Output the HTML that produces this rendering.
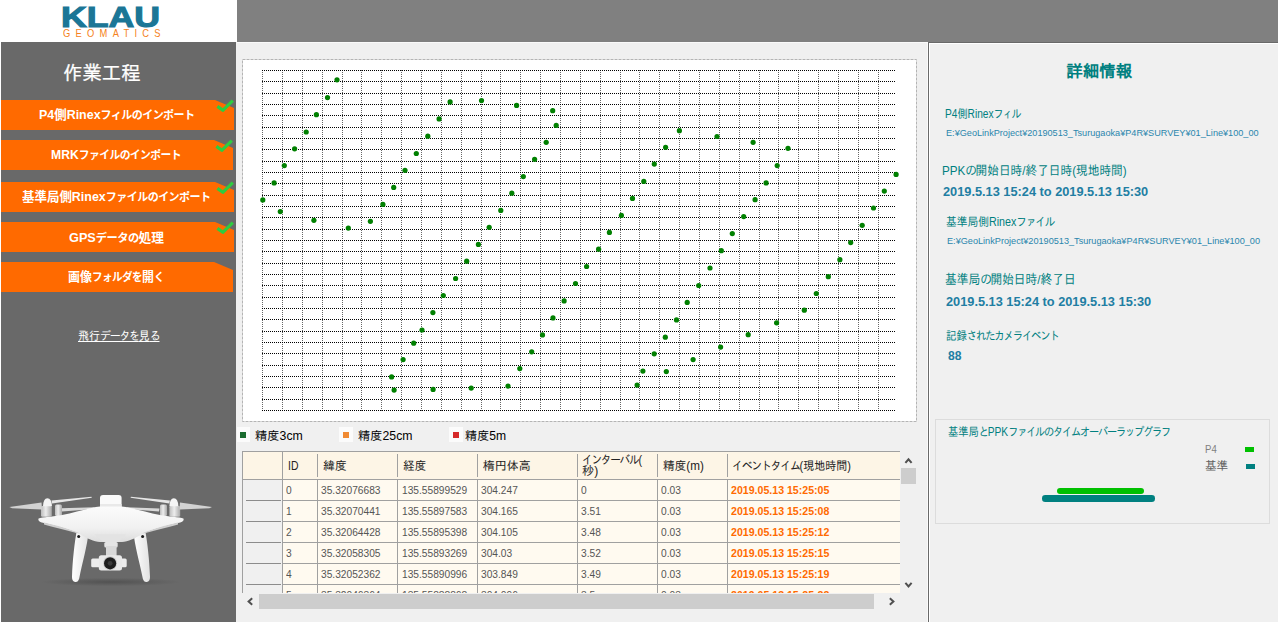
<!DOCTYPE html>
<html lang="ja">
<head>
<meta charset="utf-8">
<title>KLAU GEOMATICS</title>
<style>
html,body{margin:0;padding:0;}
body{width:1278px;height:622px;overflow:hidden;background:#f0f0f0;position:relative;font-family:"Liberation Sans","IPAGothic",sans-serif;font-size:12px;color:#000;}
.abs{position:absolute;}
#logo{position:absolute;left:0;top:0;width:237px;height:42px;background:#fff;}
#topbar{position:absolute;left:237px;top:0;width:1041px;height:42px;background:#808080;}
#side{position:absolute;left:1px;top:42px;width:235px;height:580px;background:#696969;}
#klau{position:absolute;left:60.6px;top:1.6px;font-weight:bold;font-size:29.5px;line-height:30px;color:#1b7696;white-space:nowrap;transform-origin:0 0;transform:scaleX(1.21);-webkit-text-stroke:1.1px #1b7696;}
#geo{position:absolute;left:63px;top:27.4px;font-size:11px;line-height:12px;color:#f58220;white-space:nowrap;letter-spacing:6.2px;transform-origin:0 0;transform:scaleX(0.85);}
.btn{position:absolute;height:30px;background:#ff6a00;}
.chk{position:absolute;}
/* scaled text lines */
.x{position:absolute;white-space:nowrap;transform-origin:0 0;}
.k{letter-spacing:-0.12em;}
.tt{font-size:19.5px;line-height:26px;color:#fff;-webkit-text-stroke:0.3px #fff;}
.bt .k{font-size:11.5px;letter-spacing:-0.05em;}
.bt{font-family:"Liberation Sans","Noto Sans CJK JP",sans-serif;font-weight:bold;font-size:13px;line-height:18px;color:#fff;}
.fl{font-size:12px;line-height:16px;color:#fff;text-decoration:underline;}
.t{color:#008080;font-size:12px;line-height:14px;}
.p{color:#2a86ad;font-size:9.5px;line-height:12px;}
.d{color:#217ea3;font-weight:bold;font-size:13px;line-height:14px;}
.g{}
.lg{font-size:12px;line-height:14px;color:#000;}
.hd{font-size:12px;line-height:14px;color:#222;}
.cd{font-size:11.5px;line-height:14px;color:#555;}
.ev{font-size:10.67px;line-height:14px;color:#ff6a00;font-weight:bold;}
.leg{position:absolute;top:427px;height:15px;width:13px;background:#fbfbfb;}
.leg b{position:absolute;left:3px;top:5px;width:6px;height:6px;}
.grid{position:absolute;left:242px;top:451px;width:658px;height:142px;border-left:1px solid #a0a0a0;border-top:1px solid #a0a0a0;overflow:hidden;background:#fffaf0;box-sizing:border-box;}
.grid .hdr{position:absolute;left:0;top:0;width:658px;height:27px;background:#fdf5e6;border-bottom:1px solid #a0a0a0;}
.grid .hsep{position:absolute;top:2px;width:1px;height:23px;background:#a0a0a0;}
.grid .rh{position:absolute;left:0;width:39px;height:21px;background:#f0f0f0;}
.grid .rh:after{content:"";position:absolute;left:3px;right:1px;bottom:0;height:1px;background:#8c8c8c;}
.grid .hl{position:absolute;left:40px;width:620px;height:1px;background:#a0a0a0;}
.grid .vl{position:absolute;top:28px;width:1px;height:120px;background:#a0a0a0;}
</style>
</head>
<body>
<div id="logo"><div id="klau">KLAU</div><div id="geo">GEOMATICS</div></div>
<div id="topbar"></div>
<div id="side"></div>
<div class="abs" style="left:0;top:0;width:1px;height:622px;background:#fff"></div>

<!-- buttons -->
<div class="btn" style="left:1px;top:100px;width:233px;clip-path:polygon(0 0,214px 0,233px 8px,233px 30px,0 30px)"></div>
<div class="btn" style="left:1px;top:140px;width:232px;clip-path:polygon(0 0,213px 0,232px 8px,232px 30px,0 30px)"></div>
<div class="btn" style="left:1px;top:182px;width:233px;clip-path:polygon(0 0,214px 0,233px 8px,233px 30px,0 30px)"></div>
<div class="btn" style="left:1px;top:222px;width:233px;clip-path:polygon(0 0,214px 0,233px 8px,233px 30px,0 30px)"></div>
<div class="btn" style="left:1px;top:262px;width:232px;clip-path:polygon(0 0,213px 0,232px 8px,232px 30px,0 30px)"></div>
<svg class="chk" style="left:212px;top:95.1px" width="26" height="20" viewBox="212 96 26 20"><polyline points="217.4,107.4 222.8,111.3 232.8,101.6" fill="none" stroke="#2ecc40" stroke-width="3.2" stroke-linejoin="round"/></svg>
<svg class="chk" style="left:211.2px;top:135.1px" width="26" height="20" viewBox="212 96 26 20"><polyline points="217.4,107.4 222.8,111.3 232.8,101.6" fill="none" stroke="#2ecc40" stroke-width="3.2" stroke-linejoin="round"/></svg>
<svg class="chk" style="left:212px;top:177.1px" width="26" height="20" viewBox="212 96 26 20"><polyline points="217.4,107.4 222.8,111.3 232.8,101.6" fill="none" stroke="#2ecc40" stroke-width="3.2" stroke-linejoin="round"/></svg>
<svg class="chk" style="left:212px;top:217.1px" width="26" height="20" viewBox="212 96 26 20"><polyline points="217.4,107.4 222.8,111.3 232.8,101.6" fill="none" stroke="#2ecc40" stroke-width="3.2" stroke-linejoin="round"/></svg>

<!-- drone -->
<svg class="abs" style="left:0;top:480px" width="236" height="142" viewBox="0 480 236 142">
<defs>
<linearGradient id="gb" x1="0" y1="0" x2="0" y2="1"><stop offset="0" stop-color="#fbfbfb"/><stop offset="0.6" stop-color="#f1f1f1"/><stop offset="1" stop-color="#dcdcdc"/></linearGradient>
<linearGradient id="gm" x1="0" y1="0" x2="1" y2="0"><stop offset="0" stop-color="#bdbdbd"/><stop offset="0.45" stop-color="#ededed"/><stop offset="1" stop-color="#a9a9a9"/></linearGradient>
<linearGradient id="gl" x1="0" y1="0" x2="1" y2="0"><stop offset="0" stop-color="#ffffff"/><stop offset="1" stop-color="#e2e2e2"/></linearGradient>
<radialGradient id="gs" cx="0.5" cy="0.5" r="0.5"><stop offset="0" stop-color="#4a4a4a" stop-opacity="0.75"/><stop offset="1" stop-color="#4a4a4a" stop-opacity="0"/></radialGradient>
</defs>
<!-- ground shadow -->
<ellipse cx="111" cy="582" rx="70" ry="4.2" fill="url(#gs)"/>
<!-- rear propellers -->
<polygon points="61,508.2 94.5,507.2 94.8,509 62,511.4" fill="#d8d8d8"/>
<polygon points="127,507.2 159.5,508.6 159,511.6 126.6,509" fill="#d8d8d8"/>
<!-- rear motors -->
<rect x="55" y="504.5" width="7" height="11.5" rx="1.5" fill="url(#gm)"/>
<rect x="160" y="504.5" width="7" height="11.5" rx="1.5" fill="url(#gm)"/>
<!-- GPS / RTK dome -->
<path d="M100,507.5 L100,498 Q100,495 103,495 L118.6,495 Q121.6,495 121.6,498 L121.6,507.5 Z" fill="#fafafa"/>
<path d="M100,504 L121.6,504 L121.6,507.5 L100,507.5 Z" fill="#e9e9e9"/>
<!-- legs -->
<path d="M77,529 L88.5,532 C87.5,545 82.5,562 79.2,578.5 Q78,582.5 75.2,582 Q72,581.5 72,577 C72.6,560 74.5,543 77,529 Z" fill="url(#gl)"/>
<path d="M145,529 L133.5,532 C134.5,545 139.5,562 142.8,578.5 Q144,582.5 146.8,582 Q150,581.5 150,577 C149.4,560 147.5,543 145,529 Z" fill="url(#gl)"/>
<!-- body -->
<path d="M38.6,518.5 C42,517.2 54,516.4 62,515 C75,512.6 88,508 100,506.6 L121.6,506.6 C134,508 147,512.6 160,515 C168,516.4 180,517.2 183.4,518.5 C184.5,520.5 182,522.5 178,523 C165,526 150,530.5 142,534 C135,538.5 128,541.8 122,542 L100,542 C94,541.8 87,538.5 80,534 C72,530.5 57,526 44,523 C40,522.5 37.5,520.5 38.6,518.5 Z" fill="url(#gb)"/>
<path d="M44,522.6 C57,525.6 72,530 80,533.6 C72,531.8 55,527.5 44,524.4 Z" fill="#cfcfcf"/>
<path d="M178,522.6 C165,525.6 150,530 142,533.6 C150,531.8 167,527.5 178,524.4 Z" fill="#cfcfcf"/>
<!-- belly plate -->
<path d="M94.5,534.3 L126.3,534.3 L119,542 L103,542 Z" fill="#e3e3e3"/>
<!-- leg sensors -->
<circle cx="78.7" cy="536.5" r="1.5" fill="#1a1a1a"/>
<circle cx="142.6" cy="536.5" r="1.5" fill="#1a1a1a"/>
<!-- gimbal -->
<rect x="104.3" y="542" width="13.4" height="5.5" rx="1.5" fill="#e4e4e4"/>
<rect x="106" y="546" width="10.6" height="11" fill="#d8d8d8"/>
<rect x="91.2" y="558.6" width="9" height="8.6" rx="1.5" fill="#ececec"/>
<rect x="120.5" y="558.6" width="6.2" height="8.6" rx="1.5" fill="#ececec"/>
<rect x="98.8" y="555.3" width="23.2" height="15.2" rx="2.5" fill="#e9e9e9"/>
<circle cx="110.1" cy="563.3" r="7" fill="#cfcfcf"/>
<circle cx="110.1" cy="563.3" r="6.1" fill="#1e1e1e"/>
<circle cx="110.1" cy="563.3" r="2.4" fill="#3c3c3c"/>
<!-- front motors -->
<rect x="41" y="506" width="10.8" height="10.8" rx="1.2" fill="url(#gm)"/>
<path d="M43,506.2 Q43.4,498.5 47.4,498.3 Q51.6,498.5 52,506.2 Z" fill="#f4f4f4"/>
<rect x="169.4" y="506" width="10.8" height="10.8" rx="1.2" fill="url(#gm)"/>
<path d="M169.4,506.2 Q169.8,498.5 173.8,498.3 Q178,498.5 178.4,506.2 Z" fill="#f4f4f4"/>
<!-- front propellers -->
<polygon points="9.4,507 41.5,502.4 42,509.4 12,508.2" fill="#d2d2d2"/>
<polygon points="51.5,500.6 91.5,496.8 91.8,497.8 52,503.6" fill="#e6e6e6"/>
<polygon points="212,507 180,502.4 179.5,509.4 209.4,508.2" fill="#d2d2d2"/>
<polygon points="169.9,500.6 130.9,496.8 130.6,497.8 169.4,503.6" fill="#e6e6e6"/>
</svg>


<!-- chart -->
<svg class="chart" width="675" height="363" viewBox="242 59 675 363" style="position:absolute;left:242px;top:59px">
<rect x="242.5" y="59.5" width="674" height="362" fill="#fff" stroke="#b4b4b4" stroke-dasharray="3 1"/>
<line x1="262.5" y1="70" x2="262.5" y2="411" stroke="#666" stroke-width="1" stroke-dasharray="1 1"/>
<line x1="282.5" y1="70" x2="282.5" y2="411" stroke="#666" stroke-width="1" stroke-dasharray="1 1"/>
<line x1="302.5" y1="70" x2="302.5" y2="411" stroke="#666" stroke-width="1" stroke-dasharray="1 1"/>
<line x1="322.5" y1="70" x2="322.5" y2="411" stroke="#666" stroke-width="1" stroke-dasharray="1 1"/>
<line x1="342.5" y1="70" x2="342.5" y2="411" stroke="#666" stroke-width="1" stroke-dasharray="1 1"/>
<line x1="361.5" y1="70" x2="361.5" y2="411" stroke="#666" stroke-width="1" stroke-dasharray="1 1"/>
<line x1="381.5" y1="70" x2="381.5" y2="411" stroke="#666" stroke-width="1" stroke-dasharray="1 1"/>
<line x1="401.5" y1="70" x2="401.5" y2="411" stroke="#666" stroke-width="1" stroke-dasharray="1 1"/>
<line x1="421.5" y1="70" x2="421.5" y2="411" stroke="#666" stroke-width="1" stroke-dasharray="1 1"/>
<line x1="441.5" y1="70" x2="441.5" y2="411" stroke="#666" stroke-width="1" stroke-dasharray="1 1"/>
<line x1="461.5" y1="70" x2="461.5" y2="411" stroke="#666" stroke-width="1" stroke-dasharray="1 1"/>
<line x1="481.5" y1="70" x2="481.5" y2="411" stroke="#666" stroke-width="1" stroke-dasharray="1 1"/>
<line x1="500.5" y1="70" x2="500.5" y2="411" stroke="#666" stroke-width="1" stroke-dasharray="1 1"/>
<line x1="520.5" y1="70" x2="520.5" y2="411" stroke="#666" stroke-width="1" stroke-dasharray="1 1"/>
<line x1="540.5" y1="70" x2="540.5" y2="411" stroke="#666" stroke-width="1" stroke-dasharray="1 1"/>
<line x1="560.5" y1="70" x2="560.5" y2="411" stroke="#666" stroke-width="1" stroke-dasharray="1 1"/>
<line x1="580.5" y1="70" x2="580.5" y2="411" stroke="#666" stroke-width="1" stroke-dasharray="1 1"/>
<line x1="600.5" y1="70" x2="600.5" y2="411" stroke="#666" stroke-width="1" stroke-dasharray="1 1"/>
<line x1="620.5" y1="70" x2="620.5" y2="411" stroke="#666" stroke-width="1" stroke-dasharray="1 1"/>
<line x1="639.5" y1="70" x2="639.5" y2="411" stroke="#666" stroke-width="1" stroke-dasharray="1 1"/>
<line x1="659.5" y1="70" x2="659.5" y2="411" stroke="#666" stroke-width="1" stroke-dasharray="1 1"/>
<line x1="679.5" y1="70" x2="679.5" y2="411" stroke="#666" stroke-width="1" stroke-dasharray="1 1"/>
<line x1="699.5" y1="70" x2="699.5" y2="411" stroke="#666" stroke-width="1" stroke-dasharray="1 1"/>
<line x1="719.5" y1="70" x2="719.5" y2="411" stroke="#666" stroke-width="1" stroke-dasharray="1 1"/>
<line x1="739.5" y1="70" x2="739.5" y2="411" stroke="#666" stroke-width="1" stroke-dasharray="1 1"/>
<line x1="759.5" y1="70" x2="759.5" y2="411" stroke="#666" stroke-width="1" stroke-dasharray="1 1"/>
<line x1="778.5" y1="70" x2="778.5" y2="411" stroke="#666" stroke-width="1" stroke-dasharray="1 1"/>
<line x1="798.5" y1="70" x2="798.5" y2="411" stroke="#666" stroke-width="1" stroke-dasharray="1 1"/>
<line x1="818.5" y1="70" x2="818.5" y2="411" stroke="#666" stroke-width="1" stroke-dasharray="1 1"/>
<line x1="838.5" y1="70" x2="838.5" y2="411" stroke="#666" stroke-width="1" stroke-dasharray="1 1"/>
<line x1="858.5" y1="70" x2="858.5" y2="411" stroke="#666" stroke-width="1" stroke-dasharray="1 1"/>
<line x1="878.5" y1="70" x2="878.5" y2="411" stroke="#666" stroke-width="1" stroke-dasharray="1 1"/>
<line x1="262" y1="70.5" x2="896" y2="70.5" stroke="#000" stroke-width="1" stroke-dasharray="1 1"/>
<line x1="262" y1="81.5" x2="896" y2="81.5" stroke="#000" stroke-width="1" stroke-dasharray="1 1"/>
<line x1="262" y1="93.5" x2="896" y2="93.5" stroke="#000" stroke-width="1" stroke-dasharray="1 1"/>
<line x1="262" y1="104.5" x2="896" y2="104.5" stroke="#000" stroke-width="1" stroke-dasharray="1 1"/>
<line x1="262" y1="115.5" x2="896" y2="115.5" stroke="#000" stroke-width="1" stroke-dasharray="1 1"/>
<line x1="262" y1="127.5" x2="896" y2="127.5" stroke="#000" stroke-width="1" stroke-dasharray="1 1"/>
<line x1="262" y1="138.5" x2="896" y2="138.5" stroke="#000" stroke-width="1" stroke-dasharray="1 1"/>
<line x1="262" y1="149.5" x2="896" y2="149.5" stroke="#000" stroke-width="1" stroke-dasharray="1 1"/>
<line x1="262" y1="161.5" x2="896" y2="161.5" stroke="#000" stroke-width="1" stroke-dasharray="1 1"/>
<line x1="262" y1="172.5" x2="896" y2="172.5" stroke="#000" stroke-width="1" stroke-dasharray="1 1"/>
<line x1="262" y1="183.5" x2="896" y2="183.5" stroke="#000" stroke-width="1" stroke-dasharray="1 1"/>
<line x1="262" y1="195.5" x2="896" y2="195.5" stroke="#000" stroke-width="1" stroke-dasharray="1 1"/>
<line x1="262" y1="206.5" x2="896" y2="206.5" stroke="#000" stroke-width="1" stroke-dasharray="1 1"/>
<line x1="262" y1="217.5" x2="896" y2="217.5" stroke="#000" stroke-width="1" stroke-dasharray="1 1"/>
<line x1="262" y1="229.5" x2="896" y2="229.5" stroke="#000" stroke-width="1" stroke-dasharray="1 1"/>
<line x1="262" y1="240.5" x2="896" y2="240.5" stroke="#000" stroke-width="1" stroke-dasharray="1 1"/>
<line x1="262" y1="251.5" x2="896" y2="251.5" stroke="#000" stroke-width="1" stroke-dasharray="1 1"/>
<line x1="262" y1="263.5" x2="896" y2="263.5" stroke="#000" stroke-width="1" stroke-dasharray="1 1"/>
<line x1="262" y1="274.5" x2="896" y2="274.5" stroke="#000" stroke-width="1" stroke-dasharray="1 1"/>
<line x1="262" y1="285.5" x2="896" y2="285.5" stroke="#000" stroke-width="1" stroke-dasharray="1 1"/>
<line x1="262" y1="297.5" x2="896" y2="297.5" stroke="#000" stroke-width="1" stroke-dasharray="1 1"/>
<line x1="262" y1="308.5" x2="896" y2="308.5" stroke="#000" stroke-width="1" stroke-dasharray="1 1"/>
<line x1="262" y1="319.5" x2="896" y2="319.5" stroke="#000" stroke-width="1" stroke-dasharray="1 1"/>
<line x1="262" y1="331.5" x2="896" y2="331.5" stroke="#000" stroke-width="1" stroke-dasharray="1 1"/>
<line x1="262" y1="342.5" x2="896" y2="342.5" stroke="#000" stroke-width="1" stroke-dasharray="1 1"/>
<line x1="262" y1="353.5" x2="896" y2="353.5" stroke="#000" stroke-width="1" stroke-dasharray="1 1"/>
<line x1="262" y1="365.5" x2="896" y2="365.5" stroke="#000" stroke-width="1" stroke-dasharray="1 1"/>
<line x1="262" y1="376.5" x2="896" y2="376.5" stroke="#000" stroke-width="1" stroke-dasharray="1 1"/>
<line x1="262" y1="387.5" x2="896" y2="387.5" stroke="#000" stroke-width="1" stroke-dasharray="1 1"/>
<line x1="262" y1="399.5" x2="896" y2="399.5" stroke="#000" stroke-width="1" stroke-dasharray="1 1"/>
<line x1="262" y1="410.5" x2="896" y2="410.5" stroke="#000" stroke-width="1" stroke-dasharray="1 1"/>
<circle cx="337.0" cy="79.8" r="2.6" fill="#008000"/>
<circle cx="327.5" cy="97.6" r="2.6" fill="#008000"/>
<circle cx="316.4" cy="114.7" r="2.6" fill="#008000"/>
<circle cx="306.2" cy="132.0" r="2.6" fill="#008000"/>
<circle cx="294.6" cy="148.8" r="2.6" fill="#008000"/>
<circle cx="284.3" cy="165.6" r="2.6" fill="#008000"/>
<circle cx="274.1" cy="182.9" r="2.6" fill="#008000"/>
<circle cx="262.8" cy="199.9" r="2.6" fill="#008000"/>
<circle cx="280.3" cy="211.6" r="2.6" fill="#008000"/>
<circle cx="313.9" cy="220.3" r="2.6" fill="#008000"/>
<circle cx="348.3" cy="228.1" r="2.6" fill="#008000"/>
<circle cx="370.4" cy="221.3" r="2.6" fill="#008000"/>
<circle cx="382.9" cy="204.4" r="2.6" fill="#008000"/>
<circle cx="393.7" cy="187.4" r="2.6" fill="#008000"/>
<circle cx="405.0" cy="170.3" r="2.6" fill="#008000"/>
<circle cx="416.3" cy="153.5" r="2.6" fill="#008000"/>
<circle cx="427.8" cy="136.2" r="2.6" fill="#008000"/>
<circle cx="439.1" cy="118.9" r="2.6" fill="#008000"/>
<circle cx="450.1" cy="101.9" r="2.6" fill="#008000"/>
<circle cx="481.5" cy="100.6" r="2.6" fill="#008000"/>
<circle cx="516.6" cy="105.4" r="2.6" fill="#008000"/>
<circle cx="552.7" cy="110.7" r="2.6" fill="#008000"/>
<circle cx="556.2" cy="125.4" r="2.6" fill="#008000"/>
<circle cx="546.2" cy="142.3" r="2.6" fill="#008000"/>
<circle cx="534.6" cy="159.3" r="2.6" fill="#008000"/>
<circle cx="523.3" cy="176.6" r="2.6" fill="#008000"/>
<circle cx="511.8" cy="193.2" r="2.6" fill="#008000"/>
<circle cx="500.8" cy="210.4" r="2.6" fill="#008000"/>
<circle cx="489.2" cy="227.3" r="2.6" fill="#008000"/>
<circle cx="478.4" cy="244.4" r="2.6" fill="#008000"/>
<circle cx="466.7" cy="261.2" r="2.6" fill="#008000"/>
<circle cx="455.6" cy="278.5" r="2.6" fill="#008000"/>
<circle cx="443.3" cy="295.5" r="2.6" fill="#008000"/>
<circle cx="432.9" cy="312.6" r="2.6" fill="#008000"/>
<circle cx="422.0" cy="330.0" r="2.6" fill="#008000"/>
<circle cx="413.7" cy="343.2" r="2.6" fill="#008000"/>
<circle cx="403.1" cy="359.6" r="2.6" fill="#008000"/>
<circle cx="391.6" cy="376.9" r="2.6" fill="#008000"/>
<circle cx="394.1" cy="390.1" r="2.6" fill="#008000"/>
<circle cx="433.1" cy="389.4" r="2.6" fill="#008000"/>
<circle cx="471.2" cy="388.1" r="2.6" fill="#008000"/>
<circle cx="508.0" cy="386.1" r="2.6" fill="#008000"/>
<circle cx="519.8" cy="368.6" r="2.6" fill="#008000"/>
<circle cx="531.7" cy="351.8" r="2.6" fill="#008000"/>
<circle cx="542.5" cy="334.9" r="2.6" fill="#008000"/>
<circle cx="553.0" cy="317.9" r="2.6" fill="#008000"/>
<circle cx="564.1" cy="300.9" r="2.6" fill="#008000"/>
<circle cx="575.5" cy="283.5" r="2.6" fill="#008000"/>
<circle cx="586.6" cy="266.5" r="2.6" fill="#008000"/>
<circle cx="598.6" cy="249.2" r="2.6" fill="#008000"/>
<circle cx="609.4" cy="232.4" r="2.6" fill="#008000"/>
<circle cx="621.4" cy="215.4" r="2.6" fill="#008000"/>
<circle cx="632.5" cy="198.4" r="2.6" fill="#008000"/>
<circle cx="643.8" cy="181.4" r="2.6" fill="#008000"/>
<circle cx="654.3" cy="164.1" r="2.6" fill="#008000"/>
<circle cx="665.6" cy="147.3" r="2.6" fill="#008000"/>
<circle cx="679.4" cy="130.7" r="2.6" fill="#008000"/>
<circle cx="717.0" cy="136.5" r="2.6" fill="#008000"/>
<circle cx="753.1" cy="142.3" r="2.6" fill="#008000"/>
<circle cx="788.0" cy="148.3" r="2.6" fill="#008000"/>
<circle cx="777.2" cy="165.6" r="2.6" fill="#008000"/>
<circle cx="766.1" cy="182.9" r="2.6" fill="#008000"/>
<circle cx="755.1" cy="199.7" r="2.6" fill="#008000"/>
<circle cx="743.7" cy="216.6" r="2.6" fill="#008000"/>
<circle cx="732.3" cy="233.6" r="2.6" fill="#008000"/>
<circle cx="721.3" cy="250.7" r="2.6" fill="#008000"/>
<circle cx="710.0" cy="268.0" r="2.6" fill="#008000"/>
<circle cx="698.7" cy="285.5" r="2.6" fill="#008000"/>
<circle cx="687.2" cy="302.4" r="2.6" fill="#008000"/>
<circle cx="676.5" cy="319.9" r="2.6" fill="#008000"/>
<circle cx="665.3" cy="337.2" r="2.6" fill="#008000"/>
<circle cx="654.2" cy="353.8" r="2.6" fill="#008000"/>
<circle cx="642.9" cy="371.1" r="2.6" fill="#008000"/>
<circle cx="637.1" cy="385.1" r="2.6" fill="#008000"/>
<circle cx="666.3" cy="371.6" r="2.6" fill="#008000"/>
<circle cx="693.1" cy="359.6" r="2.6" fill="#008000"/>
<circle cx="720.6" cy="347.1" r="2.6" fill="#008000"/>
<circle cx="748.2" cy="334.7" r="2.6" fill="#008000"/>
<circle cx="776.6" cy="322.8" r="2.6" fill="#008000"/>
<circle cx="804.3" cy="310.2" r="2.6" fill="#008000"/>
<circle cx="816.3" cy="293.5" r="2.6" fill="#008000"/>
<circle cx="828.3" cy="276.7" r="2.6" fill="#008000"/>
<circle cx="839.9" cy="259.7" r="2.6" fill="#008000"/>
<circle cx="850.7" cy="242.6" r="2.6" fill="#008000"/>
<circle cx="862.2" cy="225.3" r="2.6" fill="#008000"/>
<circle cx="873.5" cy="208.0" r="2.6" fill="#008000"/>
<circle cx="884.3" cy="191.1" r="2.6" fill="#008000"/>
<circle cx="896.1" cy="174.4" r="2.6" fill="#008000"/>
</svg>

<!-- legend boxes -->
<div class="leg" style="left:237px"><b style="background:#1a6b2f"></b></div>
<div class="leg" style="left:339px;width:14px"><b style="background:#f08a33;left:4px"></b></div>
<div class="leg" style="left:449px;width:14px"><b style="background:#d62a2a;left:4px"></b></div>

<!-- table -->
<div class="grid">
<div class="hdr"></div>
<div class="hsep" style="left:74px"></div>
<div class="hsep" style="left:154px"></div>
<div class="hsep" style="left:234px"></div>
<div class="hsep" style="left:334px"></div>
<div class="hsep" style="left:414px"></div>
<div class="hsep" style="left:484px"></div>
<div class="hsep" style="left:39px;top:0;height:27px"></div>
<div class="rh" style="top:28px"></div>
<div class="hl" style="top:48px"></div>
<div class="rh" style="top:49px"></div>
<div class="hl" style="top:69px"></div>
<div class="rh" style="top:70px"></div>
<div class="hl" style="top:90px"></div>
<div class="rh" style="top:91px"></div>
<div class="hl" style="top:111px"></div>
<div class="rh" style="top:112px"></div>
<div class="hl" style="top:132px"></div>
<div class="rh" style="top:133px"></div>
<div class="hl" style="top:153px"></div>
<div class="vl" style="left:39px"></div>
<div class="vl" style="left:74px"></div>
<div class="vl" style="left:154px"></div>
<div class="vl" style="left:234px"></div>
<div class="vl" style="left:334px"></div>
<div class="vl" style="left:414px"></div>
<div class="vl" style="left:484px"></div>
</div>
<!-- right panel -->
<div class="abs" style="left:237px;top:42px;width:691px;height:1px;background:#fafafa"></div>
<div class="abs" style="left:927px;top:42px;width:1px;height:580px;background:#fafafa"></div>
<div class="abs" style="left:928px;top:42px;width:350px;height:580px;border-left:1px solid #696969;border-top:1px solid #696969;box-sizing:border-box;background:#f0f0f0"></div>
<div class="abs" style="left:929px;top:43px;width:349px;height:1px;background:#fff"></div>
<div class="abs" style="left:929px;top:43px;width:1px;height:579px;background:#fff"></div>
<div class="abs" style="left:935px;top:419px;width:335px;height:105px;border:1px solid #dcdcdc;box-sizing:border-box;"></div>
<div class="abs" style="left:1245px;top:447px;width:9px;height:5px;background:#00c000"></div>
<div class="abs" style="left:1246px;top:464px;width:9px;height:5px;background:#008080"></div>
<div class="abs" style="left:1057px;top:488px;width:87px;height:6px;border-radius:3px;background:#00c000"></div>
<div class="abs" style="left:1042px;top:495px;width:113px;height:6.5px;border-radius:3.25px;background:#008080"></div>

<!-- text -->
<div id="title" class="x tt" style="left:63.1px;top:60px;transform:scaleX(0.9962)">作業工程</div>
<div id="b1" class="x bt" style="left:38.5px;top:106.4px;transform:scaleX(0.9574)">P4側Rinex<span class="k">フィルのインポート</span></div>
<div id="b2" class="x bt" style="left:51px;top:146.4px;transform:scaleX(0.9362)">MRK<span class="k">ファイルのインポート</span></div>
<div id="b3" class="x bt" style="left:21.5px;top:188.4px;transform:scaleX(0.9585)">基準局側Rinex<span class="k">ファイルのインポート</span></div>
<div id="b4" class="x bt" style="left:68.5px;top:228.5px;transform:scaleX(0.9775)">GPS<span class="k">データの</span>処理</div>
<div id="b5" class="x bt" style="left:67.5px;top:268.4px;transform:scaleX(0.9178)">画像<span class="k">フォルダを</span>開<span class="k">く</span></div>
<div id="fly" class="x fl" style="left:78px;top:328px;transform:scaleX(0.9177)">飛行<span class="k">データを</span>見<span class="k">る</span></div>
<div id="r0" class="x t" style="left:1066.3px;top:61px;font-size:16.5px;line-height:20px;font-weight:bold;transform:scaleX(1.0000)">詳細情報</div>
<div id="r1" class="x t" style="left:945px;top:107px;transform:scaleX(0.8467)">P4側Rinex<span class="k">フィル</span></div>
<div id="r2" class="x p" style="left:946.4px;top:127px;transform:scaleX(0.9613)">E:¥GeoLinkProject¥20190513_Tsurugaoka¥P4R¥SURVEY¥01_Line¥100_00</div>
<div id="r3" class="x t" style="left:941.9px;top:164px;font-size:13px;transform:scaleX(0.8972)">PPK<span class="k">の</span>開始日時/終了日時(現地時間)</div>
<div id="r4" class="x d" style="left:942.5px;top:184.7px;transform:scaleX(0.9823)">2019.5.13 15:24 to 2019.5.13 15:30</div>
<div id="r5" class="x t" style="left:945.7px;top:215px;transform:scaleX(0.8939)">基準局側Rinex<span class="k">ファイル</span></div>
<div id="r6" class="x p" style="left:947px;top:235px;transform:scaleX(0.9625)">E:¥GeoLinkProject¥20190513_Tsurugaoka¥P4R¥SURVEY¥01_Line¥100_00</div>
<div id="r7" class="x t" style="left:945px;top:272.6px;font-size:13.5px;transform:scaleX(0.8675)">基準局<span class="k">の</span>開始日時/終了日</div>
<div id="r8" class="x d" style="left:946.4px;top:295px;transform:scaleX(0.9823)">2019.5.13 15:24 to 2019.5.13 15:30</div>
<div id="r9" class="x t" style="left:945.7px;top:329px;transform:scaleX(0.8688)">記録<span class="k">されたカメライベント</span></div>
<div id="r10" class="x d" style="left:947.7px;top:348.6px;transform:scaleX(0.9330)">88</div>
<div id="r11" class="x t" style="left:947.8px;top:425px;transform:scaleX(0.8520)">基準局<span class="k">と</span>PPK<span class="k">ファイルのタイムオーバーラップグラフ</span></div>
<div id="r12" class="x g" style="left:1205.2px;top:443px;font-size:10.5px;line-height:12px;color:#808080;transform:scaleX(0.9109)">P4</div>
<div id="r13" class="x g" style="left:1205px;top:459px;font-size:12px;line-height:14px;color:#606060;transform:scaleX(0.9625)">基準</div>
<div id="l1" class="x lg" style="left:254.8px;top:429px;transform:scaleX(1.0242)">精度3cm</div>
<div id="l2" class="x lg" style="left:357.8px;top:429px;transform:scaleX(1.0217)">精度25cm</div>
<div id="l3" class="x lg" style="left:464.9px;top:429px;transform:scaleX(1.0105)">精度5m</div>
<div id="h1" class="x hd" style="left:287.8px;top:459px;transform:scaleX(0.8667)">ID</div>
<div id="h2" class="x hd" style="left:322.5px;top:459px;transform:scaleX(0.9917)">緯度</div>
<div id="h3" class="x hd" style="left:402.6px;top:459px;transform:scaleX(0.9708)">経度</div>
<div id="h4" class="x hd" style="left:482.8px;top:459px;transform:scaleX(1.0000)">楕円体高</div>
<div id="h5" class="x hd" style="left:582px;top:453px;transform:scaleX(0.8905)"><span class="k">インターバル</span>(</div>
<div id="h5b" class="x hd" style="left:582px;top:464px;transform:scaleX(1.0125)">秒)</div>
<div id="h6" class="x hd" style="left:662.8px;top:459px;transform:scaleX(0.9738)">精度(m)</div>
<div id="h7" class="x hd" style="left:732.3px;top:459px;transform:scaleX(0.9144)"><span class="k">イベントタイム</span>(現地時間)</div>
<div id="c0_0" class="x cd" style="left:286.2px;top:483px;transform:scaleX(0.8860)">0</div>
<div id="c0_1" class="x cd" style="left:320.6px;top:483px;transform:scaleX(0.8860)">35.32076683</div>
<div id="c0_2" class="x cd" style="left:401.6px;top:483px;transform:scaleX(0.8860)">135.55899529</div>
<div id="c0_3" class="x cd" style="left:480.5px;top:483px;transform:scaleX(0.8860)">304.247</div>
<div id="c0_4" class="x cd" style="left:580.7px;top:483px;transform:scaleX(0.8860)">0</div>
<div id="c0_5" class="x cd" style="left:660.9px;top:483px;transform:scaleX(0.8860)">0.03</div>
<div id="c0_6" class="x ev" style="left:731.3px;top:483px;transform:scaleX(0.9944)">2019.05.13 15:25:05</div>
<div id="c1_0" class="x cd" style="left:286.2px;top:504px;transform:scaleX(0.8860)">1</div>
<div id="c1_1" class="x cd" style="left:320.6px;top:504px;transform:scaleX(0.8860)">35.32070441</div>
<div id="c1_2" class="x cd" style="left:401.6px;top:504px;transform:scaleX(0.8860)">135.55897583</div>
<div id="c1_3" class="x cd" style="left:480.5px;top:504px;transform:scaleX(0.8860)">304.165</div>
<div id="c1_4" class="x cd" style="left:580.7px;top:504px;transform:scaleX(0.8860)">3.51</div>
<div id="c1_5" class="x cd" style="left:660.9px;top:504px;transform:scaleX(0.8860)">0.03</div>
<div id="c1_6" class="x ev" style="left:731.3px;top:504px;transform:scaleX(0.9944)">2019.05.13 15:25:08</div>
<div id="c2_0" class="x cd" style="left:286.2px;top:525px;transform:scaleX(0.8860)">2</div>
<div id="c2_1" class="x cd" style="left:320.6px;top:525px;transform:scaleX(0.8860)">35.32064428</div>
<div id="c2_2" class="x cd" style="left:401.6px;top:525px;transform:scaleX(0.8860)">135.55895398</div>
<div id="c2_3" class="x cd" style="left:480.5px;top:525px;transform:scaleX(0.8860)">304.105</div>
<div id="c2_4" class="x cd" style="left:580.7px;top:525px;transform:scaleX(0.8860)">3.48</div>
<div id="c2_5" class="x cd" style="left:660.9px;top:525px;transform:scaleX(0.8860)">0.03</div>
<div id="c2_6" class="x ev" style="left:731.3px;top:525px;transform:scaleX(0.9944)">2019.05.13 15:25:12</div>
<div id="c3_0" class="x cd" style="left:286.2px;top:546px;transform:scaleX(0.8860)">3</div>
<div id="c3_1" class="x cd" style="left:320.6px;top:546px;transform:scaleX(0.8860)">35.32058305</div>
<div id="c3_2" class="x cd" style="left:401.6px;top:546px;transform:scaleX(0.8860)">135.55893269</div>
<div id="c3_3" class="x cd" style="left:480.5px;top:546px;transform:scaleX(0.8860)">304.03</div>
<div id="c3_4" class="x cd" style="left:580.7px;top:546px;transform:scaleX(0.8860)">3.52</div>
<div id="c3_5" class="x cd" style="left:660.9px;top:546px;transform:scaleX(0.8860)">0.03</div>
<div id="c3_6" class="x ev" style="left:731.3px;top:546px;transform:scaleX(0.9944)">2019.05.13 15:25:15</div>
<div id="c4_0" class="x cd" style="left:286.2px;top:567px;transform:scaleX(0.8860)">4</div>
<div id="c4_1" class="x cd" style="left:320.6px;top:567px;transform:scaleX(0.8860)">35.32052362</div>
<div id="c4_2" class="x cd" style="left:401.6px;top:567px;transform:scaleX(0.8860)">135.55890996</div>
<div id="c4_3" class="x cd" style="left:480.5px;top:567px;transform:scaleX(0.8860)">303.849</div>
<div id="c4_4" class="x cd" style="left:580.7px;top:567px;transform:scaleX(0.8860)">3.49</div>
<div id="c4_5" class="x cd" style="left:660.9px;top:567px;transform:scaleX(0.8860)">0.03</div>
<div id="c4_6" class="x ev" style="left:731.3px;top:567px;transform:scaleX(0.9944)">2019.05.13 15:25:19</div>
<div id="c5_0" class="x cd" style="left:286.2px;top:588px;transform:scaleX(0.8860)">5</div>
<div id="c5_1" class="x cd" style="left:320.6px;top:588px;transform:scaleX(0.8860)">35.32046364</div>
<div id="c5_2" class="x cd" style="left:401.6px;top:588px;transform:scaleX(0.8860)">135.55888868</div>
<div id="c5_3" class="x cd" style="left:480.5px;top:588px;transform:scaleX(0.8860)">304.096</div>
<div id="c5_4" class="x cd" style="left:580.7px;top:588px;transform:scaleX(0.8860)">3.5</div>
<div id="c5_5" class="x cd" style="left:660.9px;top:588px;transform:scaleX(0.8860)">0.03</div>
<div id="c5_6" class="x ev" style="left:731.3px;top:588px;transform:scaleX(0.9944)">2019.05.13 15:25:22</div>
<!-- scrollbars -->
<div class="abs" style="left:900px;top:451px;width:17px;height:142px;background:#f0f0f0"></div>
<div class="abs" style="left:901px;top:468px;width:15px;height:16px;background:#cdcdcd"></div>
<div class="abs" style="left:242px;top:593px;width:675px;height:17px;background:#f0f0f0"></div>
<div class="abs" style="left:259px;top:594px;width:615px;height:15px;background:#cdcdcd"></div>
<svg class="abs" style="left:242px;top:451px" width="675" height="160" viewBox="242 451 675 160" fill="none" stroke="#505050" stroke-width="2">
<polyline points="905.4,462.9 908.5,459.3 911.6,462.9"/>
<polyline points="905.4,582.8 908.5,586.4 911.6,582.8"/>
<polyline points="252.2,598.3 248.6,601.5 252.2,604.7"/>
<polyline points="889.8,598.3 893.4,601.5 889.8,604.7"/>
</svg>
</body>
</html>
